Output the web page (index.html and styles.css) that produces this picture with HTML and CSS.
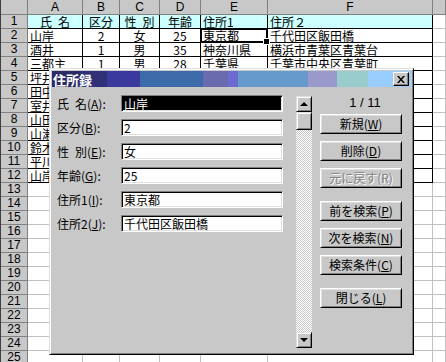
FILE: index.html
```html
<!DOCTYPE html>
<html lang="ja">
<head>
  <meta charset="UTF-8" />
  <title>住所録</title>
  <link rel="stylesheet" href="styles.css">
</head>
<body>
  <div class="sheet">
    <div class="row head"><div></div><div>A</div><div>B</div><div>C</div><div>D</div><div>E</div><div>F</div><div></div></div>
    <div class="row data title"><div class="rh">1</div><div class="ctr">氏&ensp;名</div><div>区分</div><div>性&ensp;別</div><div>年齢</div><div>住所1</div><div>住所２</div><div></div></div>
    <div class="row data"><div class="rh">2</div><div>山岸</div><div>2</div><div>女</div><div>25</div><div class="sel">東京都</div><div>千代田区飯田橋</div><div></div></div>
    <div class="row data"><div class="rh">3</div><div>酒井</div><div>1</div><div>男</div><div>35</div><div>神奈川県</div><div>横浜市青葉区青葉台</div><div></div></div>
    <div class="row data"><div class="rh">4</div><div>三都主</div><div>1</div><div>男</div><div>28</div><div>千葉県</div><div>千葉市中央区青葉町</div><div></div></div>
    <div class="row data"><div class="rh">5</div><div>坪井</div><div></div><div></div><div></div><div></div><div></div><div></div></div>
    <div class="row data"><div class="rh">6</div><div>田中</div><div></div><div></div><div></div><div></div><div></div><div></div></div>
    <div class="row data"><div class="rh">7</div><div>室井</div><div></div><div></div><div></div><div></div><div></div><div></div></div>
    <div class="row data"><div class="rh">8</div><div>山田</div><div></div><div></div><div></div><div></div><div></div><div></div></div>
    <div class="row data"><div class="rh">9</div><div>山瀬</div><div></div><div></div><div></div><div></div><div></div><div></div></div>
    <div class="row data"><div class="rh">10</div><div>鈴木</div><div></div><div></div><div></div><div></div><div></div><div></div></div>
    <div class="row data"><div class="rh">11</div><div>平川</div><div></div><div></div><div></div><div></div><div></div><div></div></div>
    <div class="row data"><div class="rh">12</div><div>山岸</div><div></div><div></div><div></div><div></div><div></div><div></div></div>
    <div class="row"><div class="rh">13</div><div></div><div></div><div></div><div></div><div></div><div></div><div></div></div>
    <div class="row"><div class="rh">14</div><div></div><div></div><div></div><div></div><div></div><div></div><div></div></div>
    <div class="row"><div class="rh">15</div><div></div><div></div><div></div><div></div><div></div><div></div><div></div></div>
    <div class="row"><div class="rh">16</div><div></div><div></div><div></div><div></div><div></div><div></div><div></div></div>
    <div class="row"><div class="rh">17</div><div></div><div></div><div></div><div></div><div></div><div></div><div></div></div>
    <div class="row"><div class="rh">18</div><div></div><div></div><div></div><div></div><div></div><div></div><div></div></div>
    <div class="row"><div class="rh">19</div><div></div><div></div><div></div><div></div><div></div><div></div><div></div></div>
    <div class="row"><div class="rh">20</div><div></div><div></div><div></div><div></div><div></div><div></div><div></div></div>
    <div class="row"><div class="rh">21</div><div></div><div></div><div></div><div></div><div></div><div></div><div></div></div>
    <div class="row"><div class="rh">22</div><div></div><div></div><div></div><div></div><div></div><div></div><div></div></div>
    <div class="row"><div class="rh">23</div><div></div><div></div><div></div><div></div><div></div><div></div><div></div></div>
    <div class="row"><div class="rh">24</div><div></div><div></div><div></div><div></div><div></div><div></div><div></div></div>
    <div class="row"><div class="rh">25</div><div></div><div></div><div></div><div></div><div></div><div></div><div></div></div>
  </div>

  <div class="dialog">
    <div class="titlebar">
      <span>住所録</span>
      <div class="close">
        <svg width="8" height="7" viewBox="0 0 8 7"><path d="M0 0h2l2 2.5L6 0h2L5 3.5 8 7H6L4 4.5 2 7H0l3-3.5z" fill="#000"/></svg>
      </div>
    </div>
    <div class="dlg-body">
      <div class="fields">
        <label>氏&ensp;名(<u>A</u>):</label><div class="field on">山岸</div>
        <label>区分(<u>B</u>):</label><div class="field">2</div>
        <label>性&ensp;別(<u>E</u>):</label><div class="field">女</div>
        <label>年齢(<u>G</u>):</label><div class="field">25</div>
        <label>住所1(<u>I</u>):</label><div class="field">東京都</div>
        <label>住所2(<u>J</u>):</label><div class="field">千代田区飯田橋</div>
      </div>
      <div class="scroll">
        <div class="sb-btn up"></div>
        <div class="sb-btn thumb"></div>
        <div class="sb-track"></div>
        <div class="sb-btn down"></div>
      </div>
      <div class="actions">
        <div class="count">1 / 11</div>
        <div class="btn">新規(<u>W</u>)</div>
        <div class="btn">削除(<u>D</u>)</div>
        <div class="btn off">元に戻す(R)</div>
        <div class="btn sep">前を検索(<u>P</u>)</div>
        <div class="btn">次を検索(<u>N</u>)</div>
        <div class="btn">検索条件(<u>C</u>)</div>
        <div class="btn sep">閉じる(<u>L</u>)</div>
      </div>
    </div>
  </div>
</body>
</html>
```

FILE: styles.css
```css
* {
  box-sizing: border-box;
}

body {
  margin: 0;
  width: 446px;
  height: 362px;
  overflow: hidden;
  position: relative;
  background: #fff;
  font-family: "Noto Sans CJK JP", sans-serif;
  font-size: 12px;
  color: #000;
}

/* spreadsheet */
.sheet {
  border-left: 1px solid #404040;
}

.row {
  display: grid;
  grid-template-columns: 27px 55px 37px 40px 41px 67px 165px minmax(0, 1fr);
  height: 14px;
}

.row > div {
  border-right: 1px solid #c0c0c0;
  border-bottom: 1px solid #c0c0c0;
  line-height: 13px;
  padding-left: 2px;
  white-space: nowrap;
}

.row > div:nth-child(3),
.row > div:nth-child(4),
.row > div:nth-child(5),
.row > .ctr {
  text-align: center;
  padding-left: 0;
}

.row > .rh,
.head > div {
  background: #c8c8c8;
  border-color: #808080;
  text-align: center;
  padding-left: 0;
  font-family: "Liberation Sans", sans-serif;
}

.head {
  height: 15px;
}

.head > div {
  line-height: 14px;
}

.data > div:nth-child(n+2):nth-child(-n+7) {
  border-color: #000;
}

.title > div:nth-child(n+2):nth-child(-n+7) {
  background: #ccffff;
}

.row > .sel {
  position: relative;
  box-shadow: inset 0 0 0 1px #000;
}

.sel::after {
  content: "";
  position: absolute;
  right: -3px;
  bottom: -3px;
  width: 5px;
  height: 5px;
  background: #000;
  border: 1px solid #fff;
}

/* data form dialog */
.dialog {
  position: absolute;
  left: 49px;
  top: 68px;
  width: 365px;
  height: 287px;
  padding: 2px;
  background: #c8c8c8;
  border: 1px solid;
  border-color: #dfdfdf #000 #000 #dfdfdf;
  box-shadow: inset 1px 1px #fff, inset -1px -1px #808080;
  display: flex;
  flex-direction: column;
}

.titlebar {
  height: 16px;
  display: flex;
  align-items: center;
  justify-content: space-between;
  padding: 0 2px 0 1px;
  color: #fff;
  font-weight: bold;
  font-size: 13px;
  background: linear-gradient(90deg,
    #2b2b66 0 28px, #31317a 28px 55px, #3a3a9e 55px 88px,
    #3d6aa8 88px 151px, #6a6aae 151px 176px, #6b6bd0 176px 186px,
    #6699cc 186px 256px, #9999cc 256px 285px, #99cccc 285px 316px,
    #99ccff 316px);
}

.close {
  width: 16px;
  height: 14px;
  background: #c8c8c8;
  border: 1px solid;
  border-color: #fff #000 #000 #fff;
  box-shadow: inset -1px -1px #808080;
  display: flex;
  align-items: center;
  justify-content: center;
}

.dlg-body {
  flex: 1;
  display: flex;
  padding: 9px 9px 4px 5px;
}

.fields {
  width: 226px;
  margin-top: -1px;
  display: grid;
  grid-template-columns: 64px 162px;
  grid-auto-rows: 17px;
  row-gap: 7px;
  align-content: start;
}

.fields label {
  align-self: center;
  line-height: 14px;
}

.field {
  background: #fff;
  border: 1px solid;
  border-color: #808080 #fff #fff #808080;
  box-shadow: inset 1px 1px #000, inset -1px -1px #dfdfdf;
  padding: 0 2px;
  line-height: 15px;
}

.field.on {
  background: #000;
  color: #fff;
}

.scroll {
  width: 16px;
  margin-left: 13px;
  display: flex;
  flex-direction: column;
}

.sb-btn {
  height: 16px;
  background: #c8c8c8;
  border: 1px solid;
  border-color: #dfdfdf #000 #000 #dfdfdf;
  box-shadow: inset 1px 1px #fff, inset -1px -1px #808080;
  display: flex;
  align-items: center;
  justify-content: center;
}

.sb-btn.thumb {
  height: 18px;
}

.sb-btn.up::before,
.sb-btn.down::before {
  content: "";
  border-left: 4px solid transparent;
  border-right: 4px solid transparent;
}

.sb-btn.up::before {
  border-bottom: 4px solid #000;
}

.sb-btn.down::before {
  border-top: 4px solid #000;
}

.sb-track {
  flex: 1;
  background: repeating-conic-gradient(#fff 0 25%, #c8c8c8 0 50%) 0 0 / 2px 2px;
}

.actions {
  width: 82px;
  margin-left: 8px;
  display: flex;
  flex-direction: column;
}

.count {
  height: 18px;
  padding-left: 8px;
  text-align: center;
  line-height: 14px;
  font-family: "Liberation Sans", sans-serif;
  font-size: 13px;
}

.btn {
  height: 20px;
  background: #c8c8c8;
  border: 1px solid;
  border-color: #fff #000 #000 #fff;
  box-shadow: inset 1px 1px #dfdfdf, inset -1px -1px #808080;
  text-align: center;
  line-height: 18px;
}

.btn + .btn {
  margin-top: 7px;
}

.btn.sep {
  margin-top: 13px;
}

.btn.off {
  color: #808080;
  text-shadow: 1px 1px #fff;
}
```
